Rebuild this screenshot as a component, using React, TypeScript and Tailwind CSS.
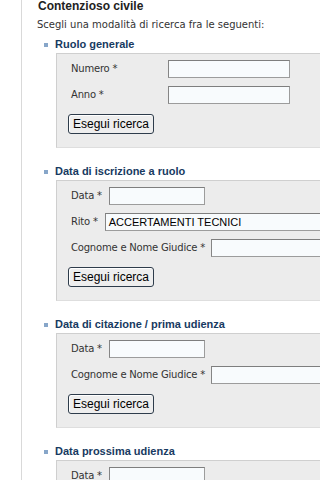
import React from 'react';

// ---------------------------------------------------------------------------
// Piccoli componenti
// ---------------------------------------------------------------------------

function TextInput({ width, value }: { width: string; value?: string }) {
  return (
    <div
      className={`flex h-[18px] shrink-0 items-center border border-[#9c9c9c] border-t-[#7e7e7e] border-l-[#858585] bg-[#f8fbfd] pl-[3px] font-['Liberation_Sans',Arial,sans-serif] text-[11px] whitespace-nowrap text-black ${width}`}
    >
      {value}
    </div>
  );
}

function SearchButton() {
  return (
    <button
      type="button"
      className="h-[20px] w-[86px] rounded-[3px] border border-[#2e3c4b] bg-[#eeeeee] font-['Liberation_Sans',Arial,sans-serif] text-[12px] leading-[18px] text-black shadow-[inset_1px_1px_0_#ffffff]"
    >
      Esegui ricerca
    </button>
  );
}

function Section({ title, children, first }: { title: string; children: React.ReactNode; first?: boolean }) {
  return (
    <div className={first ? 'mt-[7px]' : 'mt-[17px]'}>
      <div className="flex h-[13px] items-center">
        <span className="ml-[6px] h-[4px] w-[4px] bg-[#87a6c9]" />
        <span className="ml-[7px] font-['Liberation_Sans',Arial,sans-serif] text-[11px] font-bold leading-[13px] text-[#173a61]">
          {title}
        </span>
      </div>
      <div className="ml-[18px] mt-[2px] w-[300px] border-t border-b border-l border-[#cfcfcf] border-b-[#dedede] bg-[#ececec] pb-[13px] pl-[11px] pt-[6px]">
        {children}
      </div>
    </div>
  );
}

function Label({ children }: { children: React.ReactNode }) {
  return <span className="shrink-0 whitespace-nowrap pl-[3px] leading-[18px] tracking-[-0.2px] text-[#333]">{children}</span>;
}

// ---------------------------------------------------------------------------
// Haupt-Komponente
// ---------------------------------------------------------------------------

export default function App() {
  return (
    <div className="h-[480px] w-[320px] overflow-hidden bg-white font-['DejaVu_Sans',Verdana,sans-serif] text-[10px] text-[#333]">
      <div className="ml-[21px] h-full border-l border-[#d9d9d9] pl-[16px]">
        <h1 className="font-['Liberation_Sans',Arial,sans-serif] text-[12px] font-bold leading-[12px] text-[#222]">
          Contenzioso civile
        </h1>
        <p className="-ml-[1px] mt-[7px] leading-[12px] text-[#333]">
          Scegli una modalità di ricerca fra le seguenti:
        </p>

        {/* Ruolo generale */}
        <Section title="Ruolo generale" first>
          <div className="flex flex-col gap-[8px]">
            <div className="flex">
              <div className="w-[100px]">
                <Label>Numero *</Label>
              </div>
              <TextInput width="w-[122px]" />
            </div>
            <div className="flex">
              <div className="w-[100px]">
                <Label>Anno *</Label>
              </div>
              <TextInput width="w-[122px]" />
            </div>
          </div>
          <div className="mt-[10px]">
            <SearchButton />
          </div>
        </Section>

        {/* Data di iscrizione a ruolo */}
        <Section title="Data di iscrizione a ruolo">
          <div className="flex flex-col gap-[8px]">
            <div className="flex gap-[7px]">
              <Label>Data *</Label>
              <TextInput width="w-[96px]" />
            </div>
            <div className="flex gap-[7px]">
              <Label>Rito *</Label>
              <TextInput width="w-[240px]" value="ACCERTAMENTI TECNICI" />
            </div>
            <div className="flex gap-[6px]">
              <Label>Cognome e Nome Giudice *</Label>
              <TextInput width="w-[160px]" />
            </div>
          </div>
          <div className="mt-[10px]">
            <SearchButton />
          </div>
        </Section>

        {/* Data di citazione / prima udienza */}
        <Section title="Data di citazione / prima udienza">
          <div className="flex flex-col gap-[8px]">
            <div className="flex gap-[7px]">
              <Label>Data *</Label>
              <TextInput width="w-[96px]" />
            </div>
            <div className="flex gap-[6px]">
              <Label>Cognome e Nome Giudice *</Label>
              <TextInput width="w-[160px]" />
            </div>
          </div>
          <div className="mt-[10px]">
            <SearchButton />
          </div>
        </Section>

        {/* Data prossima udienza */}
        <Section title="Data prossima udienza">
          <div className="flex flex-col gap-[8px]">
            <div className="flex gap-[7px]">
              <Label>Data *</Label>
              <TextInput width="w-[96px]" />
            </div>
          </div>
        </Section>
      </div>
    </div>
  );
}
